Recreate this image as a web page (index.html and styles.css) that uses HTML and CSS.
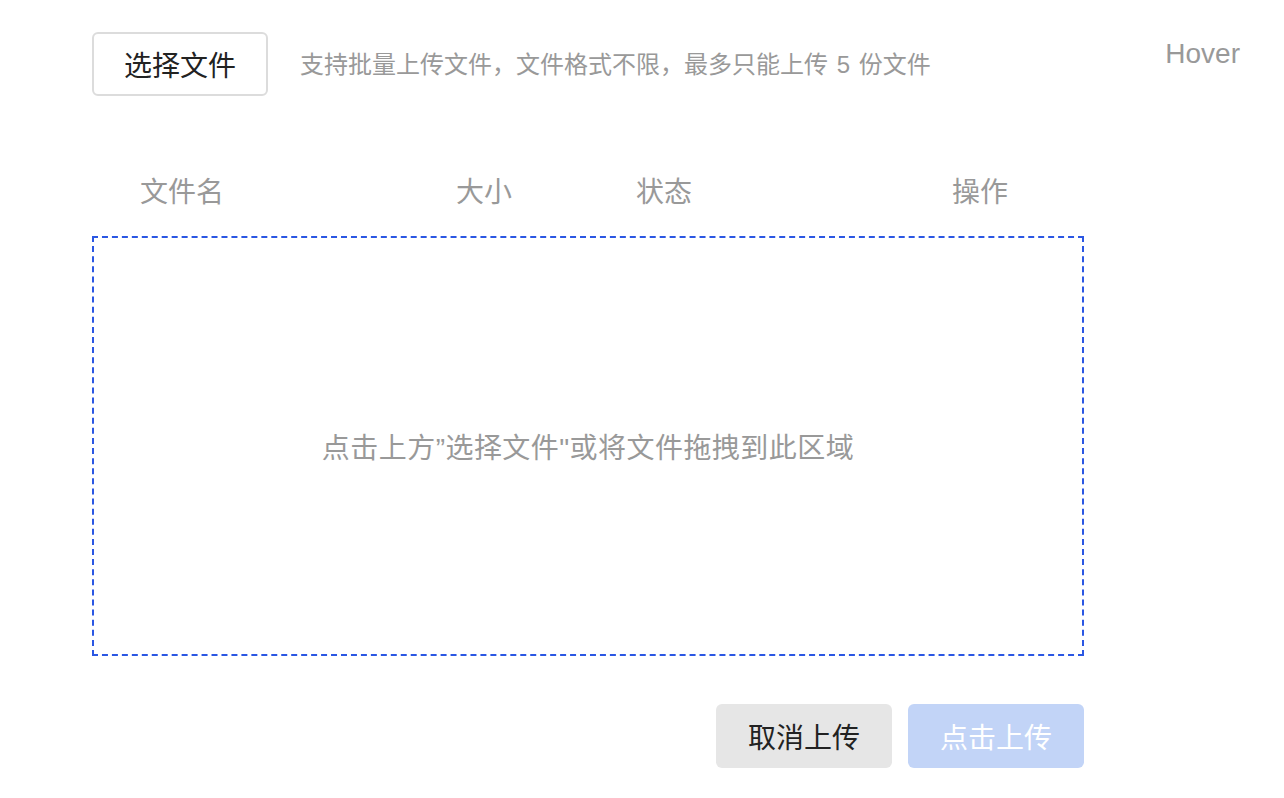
FILE: index.html
```html
<!DOCTYPE html>
<html lang="zh-CN">
<head>
    <meta charset="UTF-8">
    <title>上传文件</title>
    <link rel="stylesheet" href="styles.css">
</head>
<body>
    <div id="uploader">
        <div class="toolbar">
            <button class="btn btn-select">选择文件</button>
            <span class="hint">支持批量上传文件，文件格式不限，最多只能上传 5 份文件</span>
            <span class="hover-tag">Hover</span>
        </div>

        <div class="file-table">
            <div class="table-head">
                <div class="cell">文件名</div>
                <div class="cell">大小</div>
                <div class="cell">状态</div>
                <div class="cell">操作</div>
            </div>
            <div class="drop-zone">
                <span class="drop-tip">点击上方”选择文件"或将文件拖拽到此区域</span>
            </div>
        </div>

        <div class="actions">
            <button class="btn btn-cancel">取消上传</button>
            <button class="btn btn-upload" disabled>点击上传</button>
        </div>
    </div>
</body>
</html>
```

FILE: styles.css
```css
body {
    margin: 0;
    padding: 0;
    background-color: #fff;
    font-family: "Liberation Sans", "Noto Sans CJK SC", sans-serif;
}

#uploader {
    padding: 32px 44px 0 92px;
}

.toolbar {
    display: flex;
    align-items: center;
}

.btn {
    width: 176px;
    height: 64px;
    padding: 0;
    border: 0;
    border-radius: 6px;
    font-family: "Noto Sans CJK SC", sans-serif;
    font-size: 28px;
    color: #222;
    cursor: pointer;
}

.btn-select {
    border: 2px solid #dcdcdc;
    background-color: #fff;
}

.hint {
    margin-left: 32px;
    padding-bottom: 4px;
    font-size: 24px;
    word-spacing: 2px;
    color: #999;
}

.hover-tag {
    margin-left: auto;
    align-self: flex-start;
    margin-top: 6px;
    font-size: 28px;
    color: #999;
}

.file-table {
    width: 992px;
    margin-top: 74px;
}

.table-head {
    display: grid;
    grid-template-columns: 316px 180px 316px 180px;
    height: 40px;
    line-height: 40px;
    margin-bottom: 26px;
}

.table-head .cell {
    padding-left: 48px;
    font-family: "Noto Sans CJK SC", sans-serif;
    font-size: 28px;
    color: #999;
}

.drop-zone {
    display: flex;
    align-items: center;
    justify-content: center;
    box-sizing: border-box;
    height: 420px;
    border: 2px dashed #2b57e3;
}

.drop-tip {
    font-size: 28px;
    letter-spacing: 0.45px;
    color: #999;
}

.actions {
    width: 992px;
    display: flex;
    justify-content: flex-end;
    gap: 16px;
    margin-top: 48px;
}

.btn-cancel {
    background-color: #e6e6e6;
}

.btn-upload {
    background-color: #c2d4f7;
    color: #fff;
    cursor: not-allowed;
}
```
